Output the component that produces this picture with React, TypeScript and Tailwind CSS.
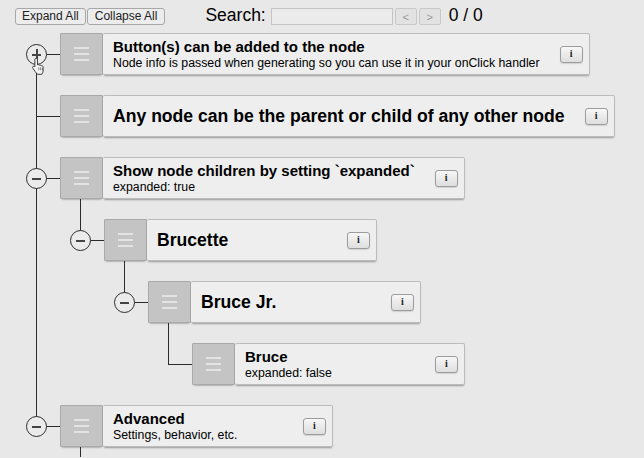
import React from 'react';

type Block = {
  top?: boolean;
  bottom?: boolean;
  own?: boolean;
  toggle?: '+' | '-';
};

type Row = {
  level: number;
  title: string;
  subtitle?: string;
  big?: boolean;
  expanded?: boolean;
  blocks: Block[];
  cursor?: boolean;
};

const rows: Row[] = [
  {
    level: 0,
    title: 'Button(s) can be added to the node',
    subtitle: 'Node info is passed when generating so you can use it in your onClick handler',
    blocks: [{ bottom: true, own: true, toggle: '+' }],
    cursor: true,
  },
  {
    level: 0,
    title: 'Any node can be the parent or child of any other node',
    big: true,
    blocks: [{ top: true, bottom: true, own: true }],
  },
  {
    level: 0,
    title: 'Show node children by setting `expanded`',
    subtitle: 'expanded: true',
    expanded: true,
    blocks: [{ top: true, bottom: true, own: true, toggle: '-' }],
  },
  {
    level: 1,
    title: 'Brucette',
    big: true,
    expanded: true,
    blocks: [{ top: true, bottom: true }, { top: true, own: true, toggle: '-' }],
  },
  {
    level: 2,
    title: 'Bruce Jr.',
    big: true,
    expanded: true,
    blocks: [{ top: true, bottom: true }, {}, { top: true, own: true, toggle: '-' }],
  },
  {
    level: 3,
    title: 'Bruce',
    subtitle: 'expanded: false',
    blocks: [{ top: true, bottom: true }, {}, {}, { top: true, own: true }],
  },
  {
    level: 0,
    title: 'Advanced',
    subtitle: 'Settings, behavior, etc.',
    expanded: true,
    blocks: [{ top: true, own: true, toggle: '-' }],
  },
];

// pointer cursor hovering the first toggle
function HandCursor() {
  return (
    <svg
      className="absolute left-[17px] top-[34px] z-20"
      width="15"
      height="18"
      viewBox="0 0 16 19"
    >
      <path
        d="M5.5 1.2c.8 0 1.4.6 1.4 1.4v5.6l.4-.1c.7-.3 1.5 0 1.8.6.6-.3 1.4-.1 1.8.5.7-.3 1.5 0 1.8.7.3.6.3 1.4.3 2.2v1.8c0 1.6-.5 3-1.4 4.4H6.8c-.6-.9-1.4-1.7-2.2-2.6L2 12c-.5-.5-.5-1.3 0-1.8.5-.5 1.3-.5 1.8 0l.3.3V2.6c0-.8.6-1.4 1.4-1.4z"
        fill="#f4f4f4"
        stroke="#333"
        strokeWidth="1"
        strokeLinejoin="round"
      />
      <path d="M8.3 11v3M10.3 11v3M12.2 11.4v2.6" stroke="#555" strokeWidth="0.8" />
    </svg>
  );
}

function Scaffold({ block, cursor }: { block: Block; cursor?: boolean }) {
  return (
    <div className="relative w-[44px] h-full shrink-0">
      {block.top && <div className="absolute left-[22px] top-0 h-[31px] w-px bg-[#2b2b2b]" />}
      {block.bottom && <div className="absolute left-[22px] top-[31px] bottom-0 w-px bg-[#2b2b2b]" />}
      {block.own && <div className="absolute left-[22px] -right-[2px] top-[31px] h-px bg-[#2b2b2b]" />}
      {block.toggle && (
        <div className="absolute left-[12px] top-[21px] z-10 flex h-[21px] w-[21px] items-center justify-center rounded-full border border-[#2b2b2b] bg-[#ebebeb]">
          <div className="h-[2px] w-[9px] bg-[#444]" />
          {block.toggle === '+' && <div className="absolute h-[11px] w-[2px] bg-[#444]" />}
        </div>
      )}
      {cursor && <HandCursor />}
    </div>
  );
}

function InfoButton() {
  return (
    <button className="flex h-[17px] w-[23px] items-center justify-center rounded-[3px] border border-[#9c9c9c] bg-gradient-to-b from-[#f7f7f7] to-[#dedede] shadow-[0_1px_1px_rgba(0,0,0,0.12)]">
      <span className="font-['Liberation_Serif',serif] text-[10px] font-bold leading-none text-[#222]">i</span>
    </button>
  );
}

function TreeRow({ row }: { row: Row }) {
  return (
    <div className="flex h-[62px]">
      {row.blocks.map((b, i) => (
        <Scaffold key={i} block={b} cursor={row.cursor && i === 0} />
      ))}
      <div className="relative flex py-[10px] pl-[2px]">
        <div className="flex h-full w-[43px] shrink-0 flex-col items-center justify-center gap-[4px] rounded-[1px] border border-[#a9a9a9] bg-[#c4c4c4] shadow-[0_2px_2px_-2px_rgba(0,0,0,0.6)]">
          <div className="h-[2px] w-[15px] bg-[#e3e3e3]" />
          <div className="h-[2px] w-[15px] bg-[#e3e3e3]" />
          <div className="h-[2px] w-[15px] bg-[#e3e3e3]" />
        </div>
        <div className="flex h-full min-w-[230px] items-center justify-between rounded-[2px] border border-l-0 border-[#bbbbbb] bg-[#eeeeee] pl-[10px] pr-[6px] shadow-[0_2px_2px_-1px_rgba(0,0,0,0.35)]">
          <div className="pr-[20px] text-black">
            <div className={row.big ? 'text-[17.6px] font-bold leading-[22px]' : 'text-[15px] font-bold leading-[17px]'}>
              {row.title}
            </div>
            {row.subtitle && <div className="text-[12.3px] leading-[16px]">{row.subtitle}</div>}
          </div>
          <InfoButton />
        </div>
        {row.expanded && <div className="absolute left-[22px] bottom-0 h-[10px] w-px bg-[#2b2b2b]" />}
      </div>
    </div>
  );
}

export default function App() {
  return (
    <div className="min-h-screen overflow-hidden bg-[#e8e8e8] font-['Liberation_Sans',Arial,sans-serif] text-black">
      {/* Toolbar */}
      <div className="flex h-[23px] items-start pl-[15px] pt-[8px]">
        <button className="h-[17px] rounded-[3px] border border-[#a8a8a8] bg-[#ececec] px-[6px] text-[12px] leading-[15px] text-[#222]">
          Expand All
        </button>
        <button className="ml-px h-[17px] rounded-[3px] border border-[#a8a8a8] bg-[#ececec] px-[7px] text-[12px] leading-[15px] text-[#222]">
          Collapse All
        </button>
        <span className="ml-[40px] -mt-[4px] text-[17.5px] leading-[22px]">Search:</span>
        <input className="ml-[5px] h-[17px] w-[122px] border border-[#c4c4c4] bg-[#ebebeb] outline-none" />
        <button className="ml-[2px] h-[17px] w-[22px] rounded-[2px] border border-[#c8c8c8] bg-[#e2e2e2] text-[11px] leading-[14px] text-[#999]">
          &lt;
        </button>
        <button className="ml-[2px] h-[17px] w-[22px] rounded-[2px] border border-[#c8c8c8] bg-[#e2e2e2] text-[11px] leading-[14px] text-[#999]">
          &gt;
        </button>
        <span className="ml-[8px] -mt-[4px] text-[17.5px] leading-[22px]">0 / 0</span>
      </div>

      {/* Tree */}
      <div className="pl-[14px]">
        {rows.map((r, i) => (
          <TreeRow key={i} row={r} />
        ))}
      </div>
    </div>
  );
}
